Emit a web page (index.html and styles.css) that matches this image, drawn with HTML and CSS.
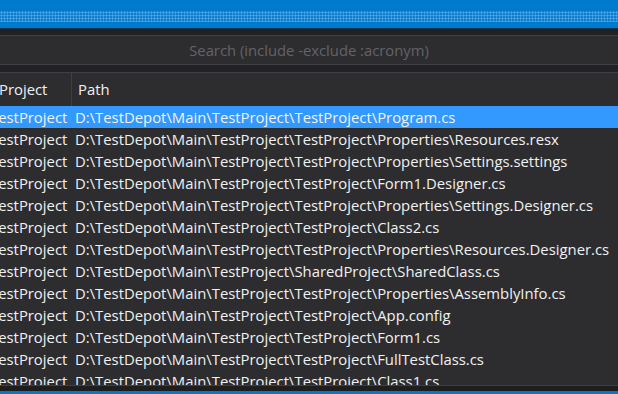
FILE: index.html
```html
<!DOCTYPE html>
<html>
<head>
<meta charset="utf-8">
<link rel="stylesheet" href="styles.css">
</head>
<body>
<div class="window">
  <div class="titlebar"><div class="grip"></div></div>
  <div class="toolbar">
    <div class="search">Search (include -exclude :acronym)</div>
  </div>
  <div class="list">
    <div class="header">
      <div class="col-project">Project</div>
      <div class="col-path">Path</div>
    </div>
    <div class="rows">
      <div class="row selected"><span class="c1">TestProject</span><span class="c2">D:\TestDepot\Main\TestProject\TestProject\Program.cs</span></div>
      <div class="row"><span class="c1">TestProject</span><span class="c2">D:\TestDepot\Main\TestProject\TestProject\Properties\Resources.resx</span></div>
      <div class="row"><span class="c1">TestProject</span><span class="c2">D:\TestDepot\Main\TestProject\TestProject\Properties\Settings.settings</span></div>
      <div class="row"><span class="c1">TestProject</span><span class="c2">D:\TestDepot\Main\TestProject\TestProject\Form1.Designer.cs</span></div>
      <div class="row"><span class="c1">TestProject</span><span class="c2">D:\TestDepot\Main\TestProject\TestProject\Properties\Settings.Designer.cs</span></div>
      <div class="row"><span class="c1">TestProject</span><span class="c2">D:\TestDepot\Main\TestProject\TestProject\Class2.cs</span></div>
      <div class="row"><span class="c1">TestProject</span><span class="c2">D:\TestDepot\Main\TestProject\TestProject\Properties\Resources.Designer.cs</span></div>
      <div class="row"><span class="c1">TestProject</span><span class="c2">D:\TestDepot\Main\TestProject\SharedProject\SharedClass.cs</span></div>
      <div class="row"><span class="c1">TestProject</span><span class="c2">D:\TestDepot\Main\TestProject\TestProject\Properties\AssemblyInfo.cs</span></div>
      <div class="row"><span class="c1">TestProject</span><span class="c2">D:\TestDepot\Main\TestProject\TestProject\App.config</span></div>
      <div class="row"><span class="c1">TestProject</span><span class="c2">D:\TestDepot\Main\TestProject\TestProject\Form1.cs</span></div>
      <div class="row"><span class="c1">TestProject</span><span class="c2">D:\TestDepot\Main\TestProject\TestProject\FullTestClass.cs</span></div>
      <div class="row"><span class="c1">TestProject</span><span class="c2">D:\TestDepot\Main\TestProject\TestProject\Class1.cs</span></div>
    </div>
  </div>
  <div class="statusbar"></div>
</div>
</body>
</html>
```
FILE: styles.css
```css
html, body {
  margin: 0;
  padding: 0;
  width: 618px;
  height: 394px;
  overflow: hidden;
  background: #252526;
}
.window {
  display: flex;
  flex-direction: column;
  width: 618px;
  height: 394px;
  font-family: "Open Sans", "Noto Sans", sans-serif;
  color: #f1f1f1;
}
.titlebar {
  flex: none;
  box-sizing: content-box;
  height: 17px;
  padding-top: 11px;
  background: #007acc;
  border-bottom: 1px solid #15364f;
}
.grip {
  height: 11px;
  background-color: #0b7dcc;
  background-image: radial-gradient(circle, #4aa3e3 0.9px, transparent 1.3px);
  background-size: 3px 3px;
}
.toolbar {
  flex: none;
  background: #222225;
  padding: 6px 0 7px 0;
}
.search {
  height: 28px;
  box-sizing: content-box;
  border-top: 1px solid #3f3f46;
  border-bottom: 1px solid #3f3f46;
  background: #2d2d30;
  color: #636368;
  font-size: 14.8px;
  line-height: 28px;
  text-align: center;
}
.list {
  flex: 1;
  display: flex;
  flex-direction: column;
  background: #2d2d30;
  border-top: 1px solid #3f3f46;
  overflow: hidden;
}
.header {
  display: flex;
  flex: none;
  height: 33px;
  font-size: 14.85px;
  line-height: 33px;
}
.col-project {
  flex: none;
  width: 72px;
  box-sizing: border-box;
  border-right: 1px solid #3f3f46;
  overflow: hidden;
  text-indent: -1px;
  white-space: nowrap;
}
.col-path {
  padding-left: 6px;
}
.rows {
  flex: 1;
  overflow: hidden;
}
.row {
  display: flex;
  height: 22px;
  line-height: 22px;
  font-size: 14.85px;
  white-space: nowrap;
}
.row.selected {
  background: #3399ff;
}
.c1 {
  flex: none;
  width: 85px;
  margin-left: -10px;
}
.statusbar {
  flex: none;
  height: 5px;
  background: #1e1e1e;
  border-top: 1px solid #3f3f46;
  border-bottom: 3px solid #007acc;
}
```
